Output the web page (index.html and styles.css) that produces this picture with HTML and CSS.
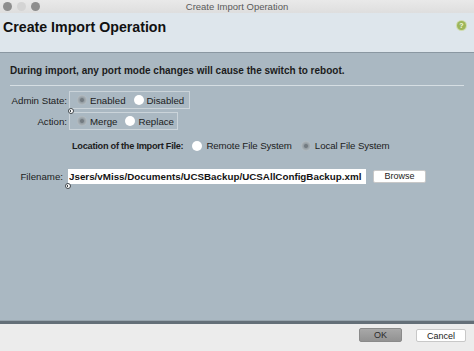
FILE: index.html
```html
<!DOCTYPE html>
<html lang="en">
<head>
    <meta charset="UTF-8">
    <title>Create Import Operation</title>
    <link rel="stylesheet" href="styles.css">
</head>
<body>
    <div class="window">
        <div class="titlebar">
            <span class="light dark"></span>
            <span class="light"></span>
            <span class="light dark"></span>
            <span class="title">Create Import Operation</span>
        </div>
        <div class="header">
            <h1>Create Import Operation</h1>
            <span class="help">?</span>
        </div>
        <div class="content">
            <p class="warning">During import, any port mode changes will cause the switch to reboot.</p>
            <div class="divider"></div>
            <div class="row">
                <label class="label">Admin State:</label>
                <div class="group">
                    <span class="opt"><span class="radio on"></span>Enabled</span>
                    <span class="opt"><span class="radio"></span>Disabled</span>
                </div>
            </div>
            <div class="row second">
                <label class="label">Action:</label>
                <div class="group">
                    <span class="info i1"></span>
                    <span class="opt"><span class="radio on"></span>Merge</span>
                    <span class="opt"><span class="radio"></span>Replace</span>
                </div>
            </div>
            <div class="row location">
                <span class="loc-label">Location of the Import File:</span>
                <span class="opt"><span class="radio"></span>Remote File System</span>
                <span class="opt"><span class="radio on"></span>Local File System</span>
            </div>
            <div class="row file">
                <label class="label fname">Filename:</label>
                <div class="field">
                    <input class="path" type="text" value="Jsers/vMiss/Documents/UCSBackup/UCSAllConfigBackup.xml">
                    <span class="info i2"></span>
                </div>
                <button class="btn browse">Browse</button>
            </div>
        </div>
        <div class="footer">
            <button class="btn ok">OK</button>
            <button class="btn cancel">Cancel</button>
        </div>
    </div>
</body>
</html>
```

FILE: styles.css
```css
* { margin: 0; padding: 0; box-sizing: border-box; }
body {
    font-family: "Liberation Sans", Arial, sans-serif;
    font-size: 9.7px;
    color: #1c1c1c;
    background: #ececec;
}
.window {
    width: 474px;
    height: 351px;
    display: flex;
    flex-direction: column;
    overflow: hidden;
}
.titlebar {
    height: 13px;
    background: linear-gradient(#e9e9e9, #dedede);
    display: flex;
    align-items: center;
    padding-left: 3px;
    gap: 5px;
    position: relative;
}
.light {
    width: 9px; height: 9px;
    border-radius: 50%;
    background: #d4d4d4;
}
.light.dark { background: #8e8e8e; }
.title {
    position: absolute;
    left: 0; right: 0; top: 0;
    text-align: center;
    font-size: 9.5px;
    line-height: 13px;
    color: #5a5a5a;
}
.header {
    height: 40px;
    background: #dee6ec;
    border-bottom: 1px solid #8a97a1;
    display: flex;
    align-items: flex-start;
    justify-content: space-between;
    padding: 6px 8px 0 3px;
}
h1 {
    font-size: 14.2px;
    font-weight: bold;
    color: #111;
    line-height: 17px;
}
.help {
    width: 9px; height: 9px;
    margin-top: 2px;
    border-radius: 50%;
    background: #9db65a;
    box-shadow: 0 0 0 1px #cfdcae;
    color: #f4f8e8;
    font-size: 7px;
    font-weight: bold;
    line-height: 9px;
    text-align: center;
}
.content {
    flex: 1;
    background: #aab8c2;
    padding: 12px 10px 0 10px;
}
.warning {
    font-weight: bold;
    font-size: 10px;
    line-height: 12px;
    white-space: nowrap;
}
.divider {
    height: 1px;
    background: #d6dee3;
    margin: 8px 0 5px 0;
}
.row {
    display: flex;
    align-items: center;
}
.second { margin-top: 3px; }
.label {
    width: 57px;
    margin-right: 2px;
    text-align: right;
    white-space: nowrap;
}
.group {
    display: flex;
    align-items: center;
    gap: 8px;
    height: 18px;
    padding: 0 5px 0 7px;
    border: 1px solid #cbd4da;
    position: relative;
}
.second .group { padding-right: 3px; }
.opt {
    display: flex;
    align-items: center;
    gap: 3px;
    white-space: nowrap;
}
.radio {
    width: 10px; height: 10px;
    border-radius: 50%;
    background: #fff;
    display: inline-block;
}
.radio.on {
    background: radial-gradient(circle, #737b81 0 1.5px, #959ea4 2.5px, #b4bcc1 5px);
}
.info {
    position: absolute;
    width: 6px; height: 6px;
    border-radius: 50%;
    background: #fff;
    border: 1px solid #40464b;
}
.info::after {
    content: "";
    position: absolute;
    left: 1px; top: 1px;
    width: 1px; height: 2px;
    background: #40464b;
}
.i1 { left: -2px; top: -5px; }
.i2 { left: -3px; bottom: -5px; }
.location {
    margin-top: 10px;
    padding-left: 62px;
    gap: 9px;
}
.loc-label {
    font-weight: bold;
    font-size: 9.2px;
    letter-spacing: -0.25px;
    white-space: nowrap;
}
.location .opt {
    gap: 4px;
    letter-spacing: -0.1px;
}
.file { margin-top: 18px; }
.fname {
    width: 53px;
    margin-right: 5px;
}
.field { position: relative; }
.path {
    display: block;
    width: 298px;
    height: 15px;
    border: none;
    outline: none;
    background: #fff;
    font-family: "Liberation Sans", Arial, sans-serif;
    font-weight: bold;
    font-size: 9.8px;
    padding: 0 2px 0 1px;
    color: #141414;
}
.btn {
    font-family: "Liberation Sans", Arial, sans-serif;
    font-size: 9px;
    background: #fff;
    border: 1px solid #c8c8c8;
    border-radius: 2px;
    color: #222;
}
.browse {
    margin-left: 7px;
    width: 53px;
    height: 13px;
    line-height: 11px;
}
.footer {
    height: 30px;
    border-top: 3px solid #646f78;
    box-shadow: 0 -1px 0 #97a4ad;
    background: #ececec;
    display: flex;
    justify-content: flex-end;
    align-items: flex-start;
    padding: 4px 8px 0 0;
    gap: 14px;
}
.ok {
    width: 43px;
    height: 14px;
    background: linear-gradient(#a8a8a8, #929292);
    border-color: #8a8a8a;
    color: #2a2a2a;
}
.cancel {
    width: 50px;
    height: 13px;
    margin-top: 1px;
}
```
